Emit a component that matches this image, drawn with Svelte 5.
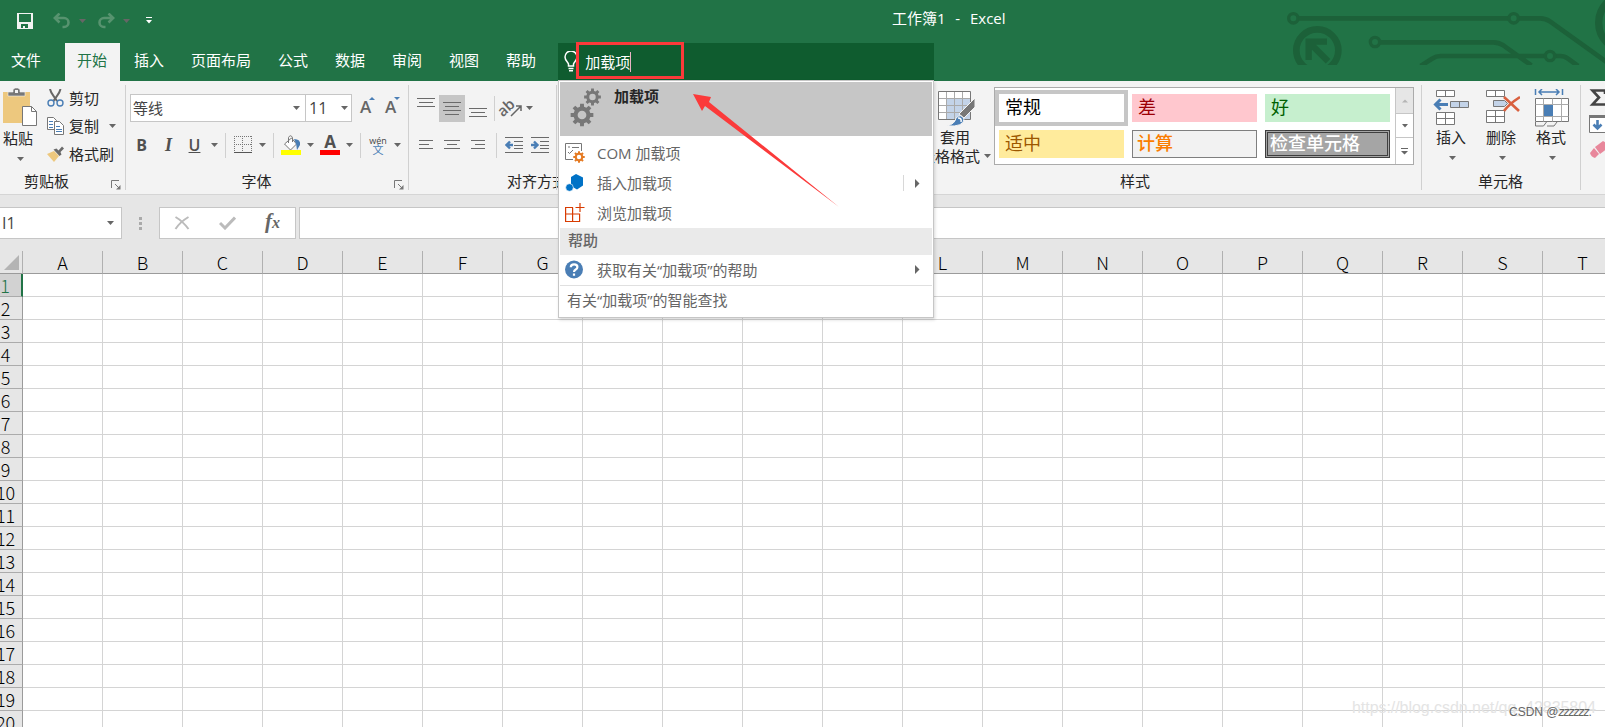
<script lang="ts">
    const tabs = ['开始', '插入', '页面布局', '公式', '数据', '审阅', '视图', '帮助'];
    const columns = 'ABCDEFGHIJKLMNOPQRST'.split('');
    const rows = Array.from({ length: 20 }, (_, i) => i + 1);
    const styles = [
        { name: '常规', kind: 'normal' },
        { name: '差', kind: 'bad' },
        { name: '好', kind: 'good' },
        { name: '适中', kind: 'neutral' },
        { name: '计算', kind: 'calc' },
        { name: '检查单元格', kind: 'check' },
    ];

    // toothed wheel around a centre, with a hole
    function gear(cx: number, cy: number, r: number, teeth = 8) {
        const pts: string[] = [];
        const half = Math.PI / teeth;
        for (let i = 0; i < teeth; i++) {
            const a = i * 2 * half - Math.PI / 2;
            for (const [da, k] of [[-0.62, 0.74], [-0.42, 1], [0.42, 1], [0.62, 0.74]]) {
                const t = a + da * half;
                pts.push(`${(cx + r * k * Math.cos(t)).toFixed(2)} ${(cy + r * k * Math.sin(t)).toFixed(2)}`);
            }
        }
        const h = r * 0.38;
        return `M${pts.join('L')}ZM${cx - h} ${cy}a${h} ${h} 0 1 0 ${2 * h} 0a${h} ${h} 0 1 0 ${-2 * h} 0Z`;
    }
</script>

{#snippet caret()}
    <svg class="caret" width="7" height="4" viewBox="0 0 7 4"><path d="M0 0h7L3.5 4z" fill="currentColor" /></svg>
{/snippet}

{#snippet launcher()}
    <svg class="launcher" width="10" height="10" viewBox="0 0 10 10" fill="none" stroke="#777">
        <path d="M.5 8V.5H8M4 4l4 4" />
        <path d="M9.500 5v4.500H5z" fill="#777" stroke="none" />
    </svg>
{/snippet}

{#snippet lines(list: number[][], w: number, h: number)}
    <svg width={w} height={h} viewBox="0 0 {w} {h}" stroke="#6a6a6a">
        {#each list as [x1, x2], i}
            <path d="M{x1} {i * 4 + 0.5}H{x2}" />
        {/each}
    </svg>
{/snippet}

<div class="window">
    <header class="titlebar">
        <div class="quick">
            <svg width="16" height="16" viewBox="0 0 16 16">
                <path fill="#f3f3f3" fill-rule="evenodd" d="M0 0h16v16H0zM2 1v8h12V1zM4 11v4h2v-2h2v2h3v-4z" />
            </svg>
            <svg class="undo" width="18" height="16" viewBox="0 0 18 16" fill="none" stroke="#57936f" stroke-width="2.600">
                <path d="M2 5h9a4.500 4.500 0 0 1 0 9H9.500M6.500.5 1.800 5l4.700 4.500" />
            </svg>
            <span class="dim first">{@render caret()}</span>
            <svg class="redo" width="18" height="16" viewBox="0 0 18 16" fill="none" stroke="#57936f" stroke-width="2.600">
                <path d="M16 5H7a4.500 4.500 0 0 0 0 9h1.500M11.500.5 16.200 5l-4.700 4.500" />
            </svg>
            <span class="dim">{@render caret()}</span>
            <svg class="more" width="6" height="7" viewBox="0 0 6 7"><path d="M0 0h6v1H0zM0 3h6L3 6.500z" fill="#fff" /></svg>
        </div>
        <div class="title">工作簿1&nbsp; - &nbsp;Excel</div>
        <svg class="circuit" width="345" height="65" viewBox="0 0 1035 195" fill="none" stroke="#1c6139" stroke-width="14">
            <circle cx="100" cy="55" r="14" stroke-width="10" />
            <path d="M115 55h630M776 55h65q16 0 30 10l170 122" />
            <circle cx="761" cy="55" r="14" stroke-width="10" />
            <circle cx="345" cy="126" r="14" stroke-width="10" />
            <path d="M360 127h340q16 0 30 9l84 60M482 198l34-22q12-8 26-8h312M885 168h15q14 0 24 8l30 22" />
            <circle cx="870" cy="168" r="14" stroke-width="10" />
            <circle cx="172" cy="151" r="63" stroke-width="20" />
            <path d="M146 180v-55h55M150 130l54 54" stroke-width="19" />
            <circle cx="1100" cy="68" r="84" stroke-width="22" />
        </svg>
    </header>

    <nav class="tabs">
        <span class="file">文件</span>
        {#each tabs as tab, i}
            <span class="tab" class:active={i === 0}>{tab}</span>
        {/each}
        <div class="tellme">
            <svg width="14" height="21" viewBox="0 0 14 21" fill="none" stroke="#fff" stroke-width="1.500">
                <path d="M4.500 15v-2C4 11 1 9.500 1 6a6 6 0 0 1 12 0c0 3.500-3 5-3.500 7v2zM4.500 17.500h5M5 19.700h4" />
            </svg>
            <span class="query">加载项</span>
        </div>
    </nav>

    <div class="ribbon">
        <section class="group clipboard">
            <div class="body">
                <div class="paste">
                    <svg width="36" height="39" viewBox="0 0 36 39">
                        <path d="M1 4h27v31H1z" fill="#edc87e" />
                        <path d="M6 8V4h5V1.500L13 0h3l2 1.500V4h5v4z" fill="#777" stroke="#f3f3f3" stroke-width=".6" />
                        <path d="M13 2h3v3h-3z" fill="#f3f3f3" />
                        <path d="M20.500 18.500h9l5 5v14h-14z" fill="#fff" stroke="#777" />
                        <path d="M29.500 18.500v5h5" fill="none" stroke="#777" />
                    </svg>
                    <span>粘贴</span>
                    {@render caret()}
                </div>
                <div class="cliplist">
                    <div>
                        <svg width="17" height="18" viewBox="0 0 17 18" fill="none">
                            <path d="M3 0c1 5 4 7 7 12M13.500 0c-1 5-4 7-7 12" stroke="#666" stroke-width="2" />
                            <circle cx="4" cy="14" r="3" stroke="#4a7eb5" stroke-width="1.400" />
                            <circle cx="13" cy="14" r="3" stroke="#4a7eb5" stroke-width="1.400" />
                        </svg>
                        <span>剪切</span>
                    </div>
                    <div>
                        <svg width="17" height="18" viewBox="0 0 17 18" fill="#fff" stroke="#777">
                            <path d="M.5.5h6l3 3v9h-9z" />
                            <path d="M2 4.500h4M2 7.500h4M2 10.500h4" stroke="#4a7eb5" />
                            <path d="M7.500 4.500h5l4 4v9h-9z" />
                            <path d="M9 9.500h4M9 12.500h6M9 14.500h6" stroke="#4a7eb5" />
                        </svg>
                        <span>复制</span>
                        {@render caret()}
                    </div>
                    <div>
                        <svg width="17" height="16" viewBox="0 0 17 16">
                            <path d="M0 8l7-3 5 5-5 6z" fill="#edc87e" />
                            <path d="M6.500 3.500l3-1 2 2 3.500-4 2 2-3.500 3.500 1 2.500-2 1.500z" fill="#6a6a6a" />
                        </svg>
                        <span>格式刷</span>
                    </div>
                </div>
            </div>
            <footer>剪贴板{@render launcher()}</footer>
        </section>

        <section class="group font">
            <div class="body">
                <div class="row top">
                    <div class="combo face"><span>等线</span>{@render caret()}</div>
                    <div class="combo size"><span>11</span>{@render caret()}</div>
                    <span class="grow">A<svg width="6" height="3" viewBox="0 0 6 3"><path d="M0 3h6L3 0z" fill="#4a7eb5" /></svg></span>
                    <span class="grow">A<svg width="6" height="3" viewBox="0 0 6 3"><path d="M0 0h6L3 3z" fill="#4a7eb5" /></svg></span>
                </div>
                <div class="row bottom">
                    <b class="letter">B</b>
                    <i class="letter">I</i>
                    <u class="letter">U</u>
                    {@render caret()}
                    <span class="rule"></span>
                    <svg class="borders" width="18" height="18" viewBox="0 0 18 18" fill="none" stroke="#777">
                        <path d="M.5 0v17M17.500 0v17M8.500 0v17M0 .5h18M0 8.500h18" stroke-dasharray="1 1" />
                        <path d="M0 16.500h18" stroke="#555" />
                    </svg>
                    {@render caret()}
                    <span class="rule"></span>
                    <svg class="fill" width="20" height="20" viewBox="0 0 20 20">
                        <path d="M3.500 9l7-6 5 6-6 6z" fill="#fff" stroke="#777" />
                        <path d="M7.500 8V2.500q2-3.500 4 0V7" fill="none" stroke="#777" />
                        <path d="M13 4q7 0 6 6l-3 5q0-6-3-11z" fill="#4a7eb5" />
                        <path d="M0 15h20v5H0z" fill="#ff0" />
                    </svg>
                    {@render caret()}
                    <span class="fontcolor">A</span>
                    {@render caret()}
                    <span class="rule"></span>
                    <span class="phonetic"><small>wén</small><em>文</em></span>
                    {@render caret()}
                </div>
            </div>
            <footer>字体{@render launcher()}</footer>
        </section>

        <section class="group align">
            <div class="body">
                <div class="row top">
                    <span class="ico up">{@render lines([[0, 18], [2, 16], [0, 18]], 18, 9)}</span>
                    <span class="ico on">{@render lines([[0, 18], [2, 16], [0, 18], [2, 16]], 18, 13)}</span>
                    <span class="ico down">{@render lines([[0, 18], [2, 16], [0, 18]], 18, 9)}</span>
                    <span class="rule"></span>
                    <svg class="orient" width="20" height="18" viewBox="0 0 20 18">
                        <text x="-4" y="13" font-size="15" font-weight="600" fill="#666" transform="rotate(-42 5 11)">ab</text>
                        <path d="M8 17L18 7M13 7h5v5" fill="none" stroke="#666" stroke-width="1.500" />
                    </svg>
                    {@render caret()}
                </div>
                <div class="row bottom">
                    <span class="ico">{@render lines([[0, 14], [0, 10], [0, 14]], 14, 10)}</span>
                    <span class="ico">{@render lines([[0, 16], [3, 13], [0, 16]], 16, 10)}</span>
                    <span class="ico">{@render lines([[0, 14], [4, 14], [0, 14]], 14, 10)}</span>
                    <span class="rule"></span>
                    {#each [false, true] as right}
                        <svg class="indent" width="18" height="16" viewBox="0 0 18 16" fill="none" stroke="#6a6a6a">
                            <path d="M0 .5h18M9 4.500h9M9 8.500h9M9 11.500h9M0 15.500h18" />
                            <path d={right ? 'M0 8h6M3 4.500L6.500 8 3 11.500' : 'M8 8H2M5 4.500L1.500 8 5 11.500'} stroke="#4a7eb5" stroke-width="2.400" />
                        </svg>
                    {/each}
                </div>
            </div>
            <footer>对齐方式</footer>
        </section>

        <section class="group stylegroup">
            <div class="body">
                <div class="tablestyle">
                    <svg width="38" height="36" viewBox="0 0 38 36">
                        <path d="M.5.5h32v28H.5z" fill="#fff" stroke="#777" />
                        <path d="M9 8h23v20H9z" fill="#c3d3e8" />
                        <path d="M8.500 1v27M16.500 1v27M24.500 1v27M1 7.500h31M1 14.500h31M1 21.500h31" stroke="#aaa" fill="none" />
                        <path d="M37 7v9L26 27l-5-4z" fill="#777" stroke="#f3f3f3" />
                        <path d="M9 35q8-2 9-8 5-5 8 1 0 8-17 7z" fill="#4a7eb5" stroke="#f3f3f3" />
                        <path d="M20 27q4 0 3 4" stroke="#fff" stroke-width="1.500" fill="none" />
                    </svg>
                    <span>套用</span>
                    <span class="second">表格格式{@render caret()}</span>
                </div>
                <div class="gallery">
                    <div class="swatches">
                        {#each styles as s}
                            <span class={s.kind}>{s.name}</span>
                        {/each}
                    </div>
                    <div class="scroll">
                        <span class="off"><svg width="6" height="4" viewBox="0 0 6 4"><path d="M0 3.500h6L3 .5z" fill="#b5b5b5" /></svg></span>
                        <span><svg width="6" height="4" viewBox="0 0 6 4"><path d="M0 0h6L3 3.500z" fill="#666" /></svg></span>
                        <span><svg width="7" height="7" viewBox="0 0 7 7"><path d="M0 0h7v1H0zM0 3h7L3.500 6.500z" fill="#666" /></svg></span>
                    </div>
                </div>
            </div>
            <footer>样式</footer>
        </section>

        <section class="group cells">
            <div class="body">
                <div class="big">
                    <svg width="38" height="38" viewBox="0 0 38 38" fill="#fff" stroke="#777">
                        <path d="M4.500 1.500h18v6h-18zM13.500 1.500v6M4.500 23.500h18v12h-18zM13.500 23.500v12M4.500 29.500h18" />
                        <path d="M18.500 12.500h18v6h-18zM27.500 12.500v6" fill="#c3d3e8" />
                        <path d="M16 15.500H4M8.500 10.500L3.500 15.500l5 5" fill="none" stroke="#4a7eb5" stroke-width="3" />
                    </svg>
                    <span>插入</span>
                    {@render caret()}
                </div>
                <div class="big">
                    <svg width="38" height="38" viewBox="0 0 38 38" fill="#fff" stroke="#777">
                        <path d="M4.500 1.500h18v6h-18zM13.500 1.500v6M4.500 21.500h18v12h-18zM13.500 21.500v12M4.500 27.500h18" />
                        <path d="M11.500 11.500h11l3 3-3 3h-11z" fill="#c3d3e8" />
                        <path d="M22 8l15 14M38 8Q27 15 22 22" fill="none" stroke="#d9603f" stroke-width="2.600" />
                    </svg>
                    <span>删除</span>
                    {@render caret()}
                </div>
                <div class="big">
                    <svg width="38" height="38" viewBox="0 0 38 38" fill="#fff" stroke="#777">
                        <path d="M3.500 9.500h33v23h-33z" />
                        <path d="M11.500 9.500v23M20.500 9.500v23M29.500 9.500v23M3.500 15.500h33M3.500 27.500h33" stroke="#aaa" />
                        <path d="M12 16h9v11h-9z" fill="#4a7eb5" stroke="none" />
                        <path d="M3.500 33v4h8l3-4M15 37h7l3-4" fill="none" />
                        <path d="M3.500 0v6M30.500 0v6M7 3h20M10 0L7 3l3 3M24 0l3 3-3 3" fill="none" stroke="#4a7eb5" stroke-width="1.500" />
                    </svg>
                    <span>格式</span>
                    {@render caret()}
                </div>
            </div>
            <footer>单元格</footer>
        </section>

        <section class="group edit">
            <svg width="17" height="18" viewBox="0 0 17 18" fill="none"><path d="M16 5V1.500H3.500L10 8.500l-6.500 7H17" stroke="#444" stroke-width="2.600" /></svg>
            <svg width="17" height="18" viewBox="0 0 17 18" fill="none">
                <path d="M.5.5h18v17H.5z" fill="#fff" stroke="#777" />
                <path d="M0 0h18v3H0z" fill="#777" />
                <path d="M8.500 5v8M4.500 9.500l4 4 4-4" stroke="#4a7eb5" stroke-width="2.600" />
            </svg>
            <svg width="17" height="17" viewBox="0 0 17 17"><path d="M6 6l8-6 8 5-11 8z" fill="#e8879b" /><path d="M5 7l5 6-4 4q-4-1-5-5z" fill="#e8879b" /></svg>
        </section>
    </div>

    <div class="formula">
        <div class="namebox"><span>I1</span>{@render caret()}</div>
        <svg class="dots" width="3" height="13" viewBox="0 0 3 13" fill="#aaa"><path d="M0 0h3v3H0zM0 5h3v3H0zM0 10h3v3H0z" /></svg>
        <div class="fx">
            <svg width="16" height="14" viewBox="0 0 16 14" fill="none" stroke="#bbb" stroke-width="2"><path d="M1.500 1q7 4 13 12M14.500 1Q6 6 1.500 13" /></svg>
            <svg width="17" height="14" viewBox="0 0 17 14" fill="none" stroke="#bbb" stroke-width="3"><path d="M1 7l5 5L16 1.500" /></svg>
            <span><i>f</i><i class="x">x</i></span>
        </div>
        <div class="input"></div>
    </div>

    <div class="sheet">
        <div class="line head">
            <span class="corner"><svg width="15" height="15" viewBox="0 0 15 15"><path d="M15 0v15H0z" fill="#b4b4b4" /></svg></span>
            {#each columns as c}
                <span class="col">{c}</span>
            {/each}
        </div>
        {#each rows as r}
            <div class="line">
                <span class="num" class:current={r === 1}><span>{r}</span></span>
                {#each columns as _}
                    <span class="cell"></span>
                {/each}
            </div>
        {/each}
    </div>

    <div class="menu">
        <div class="best">
            <svg width="38" height="40" viewBox="0 0 38 40" fill="#777" fill-rule="evenodd">
                <path d={gear(24.5, 9, 8.5)} />
                <path d={gear(14, 27, 11.5)} />
            </svg>
            <b>加载项</b>
        </div>
        <div class="item">
            <svg width="20" height="20" viewBox="0 0 20 20" fill="none">
                <path d="M8 16.500H.5V.5h16V8" stroke="#777" />
                <path d="M3 4h2M7 4.500h7M3 9l1.500 1.500L8 7" stroke="#777" />
                <path d={gear(14, 14, 5.8)} fill="#e57a22" fill-rule="evenodd" />
            </svg>
            <span>COM 加载项</span>
        </div>
        <div class="item split">
            <svg width="20" height="20" viewBox="0 0 20 20" fill="#0072c6"><path d="M11 1l7 3.500v8l-6 4-6-3.500V4z" /><circle cx="4.500" cy="14.500" r="3.800" stroke="#fff" stroke-width=".6" /></svg>
            <span>插入加载项</span>
            <svg class="arrow" width="5" height="9" viewBox="0 0 5 9"><path d="M0 0v9l4.500-4.500z" fill="#666" /></svg>
        </div>
        <div class="item">
            <svg width="20" height="20" viewBox="0 0 20 20" fill="none" stroke="#d83b01" stroke-width="1.200"><path d="M8 4.500H.6v14h14V11H.6M7.600 4.500v14M15 0v9M10.500 4.500h9" /></svg>
            <span>浏览加载项</span>
        </div>
        <div class="heading">帮助</div>
        <div class="item">
            <svg width="20" height="20" viewBox="0 0 20 20"><circle cx="9" cy="9.500" r="9" fill="#4a7eb5" /><path d="M5.800 7.300q0-3 3.300-3t3.300 2.600q0 1.600-1.700 2.600T9 12M9 13.500v2.200" fill="none" stroke="#fff" stroke-width="2.200" /></svg>
            <span>获取有关“加载项”的帮助</span>
            <svg class="arrow" width="5" height="9" viewBox="0 0 5 9"><path d="M0 0v9l4.500-4.500z" fill="#666" /></svg>
        </div>
        <div class="lookup">有关“加载项”的智能查找</div>
    </div>

    <div class="marker"></div>
    <svg class="pointer" width="146" height="113" viewBox="0 0 146 113"><path d="M0 0l18 3-2 5L146 113 12 12l-3 5z" fill="#fb3a3a" /></svg>

    <div class="blog">https://blog.csdn.net/qq_42835804</div>
    <div class="csdn">CSDN @<i>zzzzzz</i>.</div>
</div>

<style>
    :global(body) {
        margin: 0;
        overflow: hidden;
    }

    .window {
        position: relative;
        width: 1605px;
        height: 727px;
        overflow: hidden;
        background: #fff;
        color: #262626;
        font: 15px/20px "Open Sans", "Noto Sans CJK SC", sans-serif;
        white-space: nowrap;
    }

    .window * {
        box-sizing: border-box;
    }

    svg {
        display: block;
        flex: none;
    }

    .titlebar {
        position: relative;
        height: 43px;
        background: #217346;
        color: #fff;
    }

    .quick {
        display: flex;
        align-items: center;
        height: 41px;
        padding-left: 17px;
    }

    .undo {
        margin-left: 20px;
    }

    .redo {
        margin-left: 11px;
    }

    .dim {
        margin-left: 8px;
        color: #57936f;
    }

    .more {
        margin-left: 16px;
    }

    .title {
        position: absolute;
        top: 8px;
        left: 892px;
        word-spacing: 1px;
    }

    .circuit {
        position: absolute;
        top: 0;
        right: 0;
        z-index: 1;
    }

    .tabs {
        display: flex;
        height: 38px;
        background: #217346;
        color: #fff;
        line-height: 34px;
    }

    .file {
        width: 65px;
        padding-left: 11px;
    }

    .tab {
        margin-right: 2px;
        padding: 0 13px 0 12px;
    }

    .tab.active {
        background: #f3f3f3;
        color: #217346;
    }

    .tellme {
        display: flex;
        align-items: center;
        width: 376px;
        margin-left: 7px;
        padding: 0 0 1px 6px;
        background: #0f5c2f;
    }

    .query {
        margin-left: 7px;
        border-right: 1px solid #e9b3c4;
        line-height: 20px;
    }

    .ribbon {
        display: flex;
        height: 114px;
        background: #f3f3f3;
        border-bottom: 1px solid #d5d5d5;
    }

    .group {
        position: relative;
        display: flex;
        flex: none;
        flex-direction: column;
        height: 113px;
    }

    .group::after {
        position: absolute;
        top: 4px;
        right: 0;
        width: 1px;
        height: 105px;
        background: #d0d0d0;
        content: '';
    }

    .group .body {
        display: flex;
        height: 90px;
    }

    footer {
        position: relative;
        text-align: center;
    }

    .launcher {
        position: absolute;
        right: 5px;
        bottom: 1px;
    }

    .caret {
        flex: none;
        color: #666;
    }

    .clipboard {
        width: 126px;
    }

    .clipboard footer {
        padding-right: 33px;
    }

    .paste {
        display: flex;
        flex-direction: column;
        align-items: center;
        width: 40px;
        padding-top: 7px;
    }

    .paste span {
        margin: 1px 4px 9px 0;
    }

    .cliplist {
        padding: 3px 0 0 7px;
    }

    .cliplist div {
        display: flex;
        align-items: center;
        height: 28px;
    }

    .cliplist span {
        margin-left: 5px;
    }

    .cliplist .caret,
    .cliplist :global(.caret) {
        margin-left: 10px;
    }

    .font {
        width: 283px;
    }

    .font .body,
    .align .body {
        flex-direction: column;
    }

    .font footer {
        padding-right: 22px;
    }

    .row {
        display: flex;
        flex: none;
        align-items: center;
    }

    .row.top {
        height: 28px;
        margin-top: 13px;
    }

    .row.bottom {
        height: 26px;
        margin-top: 10px;
    }

    .combo {
        display: flex;
        align-items: center;
        justify-content: space-between;
        height: 28px;
        border: 1px solid #c6c6c6;
        background: #fff;
        color: #444;
    }

    .face {
        width: 176px;
        margin-left: 4px;
        padding: 0 5px 0 2px;
    }

    .size {
        width: 47px;
        margin-left: -1px;
        padding: 0 3px 0 3px;
        font-size: 16px;
    }

    .grow {
        display: flex;
        width: 14px;
        margin: -2px 0 0 8px;
        color: #666;
        font-size: 17px;
        font-weight: 600;
    }

    .grow svg {
        margin-left: -2px;
    }

    .grow + .grow {
        margin-left: 11px;
    }

    .letter {
        width: 27px;
        color: #505050;
        font-size: 16px;
        text-align: center;
    }

    i.letter {
        font-family: "Liberation Serif", serif;
        font-size: 18px;
        font-weight: 700;
    }

    .font .bottom {
        padding-left: 2px;
    }

    u.letter {
        width: 25px;
        font-weight: 600;
    }

    .font .bottom .caret {
        margin-left: 4px;
    }

    .rule {
        width: 1px;
        height: 25px;
        margin: 0 8px 0 7px;
        background: #d0d0d0;
    }

    .font .bottom .borders + .caret {
        margin-left: 7px;
    }

    .font .bottom .fill {
        margin-left: -1px;
    }

    .font .bottom .fill + .caret {
        margin-left: 6px;
    }

    .fontcolor {
        width: 20px;
        height: 20px;
        margin-left: 6px;
        border-bottom: 5px solid #f00;
        color: #505050;
        font-size: 17px;
        font-weight: 700;
        line-height: 14px;
        text-align: center;
    }

    .font .bottom .fontcolor + .caret {
        margin-left: 6px;
    }

    .phonetic {
        display: flex;
        flex-direction: column;
        align-items: center;
        width: 18px;
        color: #4a7eb5;
        line-height: 9px;
    }

    .font .bottom .phonetic + .caret {
        margin-left: 7px;
    }

    .phonetic small {
        color: #444;
        font-size: 9px;
    }

    .phonetic em {
        font-size: 11px;
        font-style: normal;
    }

    .align {
        width: 148px;
        padding-left: 8px;
    }

    .align footer {
        padding-left: 90px;
        text-align: left;
    }

    .ico {
        display: flex;
        align-items: center;
        justify-content: center;
        width: 26px;
        height: 27px;
    }

    .align .top .ico.up {
        width: 18px;
        padding-bottom: 12px;
    }

    .align .top .ico.on {
        margin: 0 4px;
        background: #c6c6c6;
    }

    .align .top .ico.down {
        width: 18px;
        padding-top: 8px;
    }

    .orient {
        overflow: visible;
    }

    .orient + .caret {
        margin-left: 3px;
    }

    .align .bottom .ico {
        width: 26px;
        margin-left: -4px;
    }

    .align .bottom .ico + .ico {
        margin-left: 0;
    }

    .align .bottom .rule {
        margin: 0 8px 0 5px;
    }

    .indent + .indent {
        margin-left: 8px;
    }

    .stylegroup {
        width: 865px;
        padding-left: 370px;
    }

    .tablestyle {
        display: flex;
        flex-direction: column;
        width: 67px;
        padding-top: 10px;
    }

    .tablestyle svg {
        margin-left: 11px;
    }

    .tablestyle span {
        margin-left: 13px;
    }

    .tablestyle .second {
        display: flex;
        align-items: center;
        margin: -1px 0 0 -7px;
    }

    .tablestyle .second .caret,
    .second :global(.caret) {
        margin-left: 4px;
    }

    .gallery {
        display: flex;
        height: 78px;
        margin-top: 6px;
        border: 1px solid #ababab;
        background: #fff;
    }

    .swatches {
        display: grid;
        grid-template-columns: repeat(3, 125px);
        grid-auto-rows: 28px;
        gap: 8px;
        padding: 6px 5px 0 4px;
        font-size: 18px;
        line-height: 27px;
    }

    .swatches span {
        padding-left: 6px;
    }

    .normal {
        color: #000;
        outline: 4px solid #c6c6c6;
    }

    .bad {
        background: #ffc7ce;
        color: #9c0006;
    }

    .good {
        background: #c6efce;
        color: #006100;
    }

    .neutral {
        background: #ffeb9c;
        color: #9c5700;
    }

    .swatches .calc {
        padding-left: 4px;
        border: 1px solid #7f7f7f;
        background: #f2f2f2;
        color: #fa7d00;
        font-weight: 500;
        line-height: 25px;
    }

    .swatches .check {
        padding-left: 2px;
        border: 3px double #3f3f3f;
        background: #a5a5a5;
        color: #fff;
        font-weight: 500;
        line-height: 21px;
    }

    .scroll {
        width: 18px;
        border-left: 1px solid #c6c6c6;
    }

    .scroll span {
        display: flex;
        align-items: center;
        justify-content: center;
        height: 24px;
        border-bottom: 1px solid #c6c6c6;
    }

    .scroll .off {
        height: 26px;
        background: #e6e6e6;
    }

    .scroll span:last-child {
        height: 26px;
        border: 0;
    }

    .stylegroup footer {
        width: 416px;
    }

    .cells {
        width: 159px;
        padding-left: 4px;
    }

    .big {
        display: flex;
        flex-direction: column;
        align-items: center;
        width: 50px;
        padding-top: 8px;
    }

    .big svg:first-child {
        margin-left: -1px;
    }

    .big:last-child svg:first-child {
        margin-left: 0;
    }

    .big span {
        margin: 0 0 9px;
    }

    .big .caret {
        margin-left: 3px;
    }

    .cells footer {
        padding-right: 6px;
    }

    .edit {
        gap: 8px;
        padding: 8px 0 0 8px;
        width: 30px;
    }

    .edit::after {
        display: none;
    }

    .formula {
        display: flex;
        align-items: center;
        height: 56px;
        background: #e6e6e6;
    }

    .namebox,
    .fx,
    .input {
        display: flex;
        align-items: center;
        height: 32px;
        border: 1px solid #c6c6c6;
        background: #fff;
    }

    .namebox {
        justify-content: space-between;
        width: 122px;
        padding: 0 7px 0 2px;
        border-left: 0;
        color: #444;
        font-size: 16px;
    }

    .dots {
        margin: 0 17px;
    }

    .fx {
        width: 137px;
        padding-left: 14px;
    }

    .fx svg + svg {
        margin-left: 29px;
    }

    .fx span {
        margin: -3px 0 0 29px;
        color: #666;
        font: bold 21px/24px "Liberation Serif", serif;
    }

    .fx .x {
        font-size: 16px;
    }

    .input {
        flex: 1;
        margin-left: 3px;
        border-right: 0;
    }

    .sheet {
        color: #000;
        font: 300 18px/22px "Noto Sans CJK SC", sans-serif;
    }

    .line {
        display: flex;
        height: 23px;
    }

    .line > span {
        flex: none;
        width: 80px;
        border-right: 1px solid #d4d4d4;
        border-bottom: 1px solid #d4d4d4;
    }

    .line > .corner {
        width: 23px;
        padding: 4px 0 0 4px;
        border-color: #c0c0c0 #b0b0b0 #9b9b9b;
        background: #e6e6e6;
    }

    .line > .col {
        border-color: #b0b0b0;
        border-bottom-color: #9b9b9b;
        background: #e6e6e6;
        text-align: center;
    }

    .line > .num {
        display: flex;
        justify-content: center;
        width: 23px;
        padding-right: 11px;
        border-color: #ababab;
        border-right-color: #9b9b9b;
        background: #e6e6e6;
    }

    .line > .current {
        border-right: 2px solid #217346;
        background: #d2d2d2;
        color: #217346;
    }

    .menu {
        position: absolute;
        top: 80px;
        left: 558px;
        width: 376px;
        height: 238px;
        padding: 1px;
        border: 1px solid #c6c6c6;
        background: #fff;
        box-shadow: 1px 2px 3px rgba(0, 0, 0, 0.15);
        color: #666;
    }

    .best {
        display: flex;
        height: 54px;
        margin-bottom: 2px;
        padding: 6px 0 0 8px;
        background: #c6c6c6;
        color: #262626;
    }

    .best b {
        margin-left: 8px;
        font-weight: 600;
        line-height: 16px;
    }

    .item {
        position: relative;
        display: flex;
        align-items: center;
        height: 30px;
        padding-left: 5px;
    }

    .item > span {
        margin-left: 12px;
    }

    .arrow {
        margin: 0 12px 0 auto;
    }

    .split::after {
        position: absolute;
        top: 7px;
        right: 28px;
        width: 1px;
        height: 16px;
        background: #d8d8d8;
        content: '';
    }

    .heading {
        height: 27px;
        padding-left: 8px;
        background: #eaeaea;
        font-weight: 500;
        line-height: 25px;
    }

    .heading + .item {
        padding-bottom: 1px;
    }

    .lookup {
        height: 31px;
        border-top: 1px solid #e0e0e0;
        padding-left: 7px;
        line-height: 29px;
    }

    .marker {
        position: absolute;
        top: 42px;
        left: 576px;
        width: 108px;
        height: 37px;
        border: 3px solid #fb3a3a;
    }

    .pointer {
        position: absolute;
        top: 94px;
        left: 693px;
    }

    .blog {
        position: absolute;
        top: 698px;
        left: 1352px;
        color: #e4e4e4;
        font: 16px/20px "Liberation Sans", sans-serif;
        letter-spacing: -0.05px;
    }

    .csdn {
        position: absolute;
        top: 702px;
        left: 1509px;
        color: #666;
        font: 12px/20px "Liberation Sans", sans-serif;
    }

    .csdn i {
        letter-spacing: -1px;
    }
</style>
